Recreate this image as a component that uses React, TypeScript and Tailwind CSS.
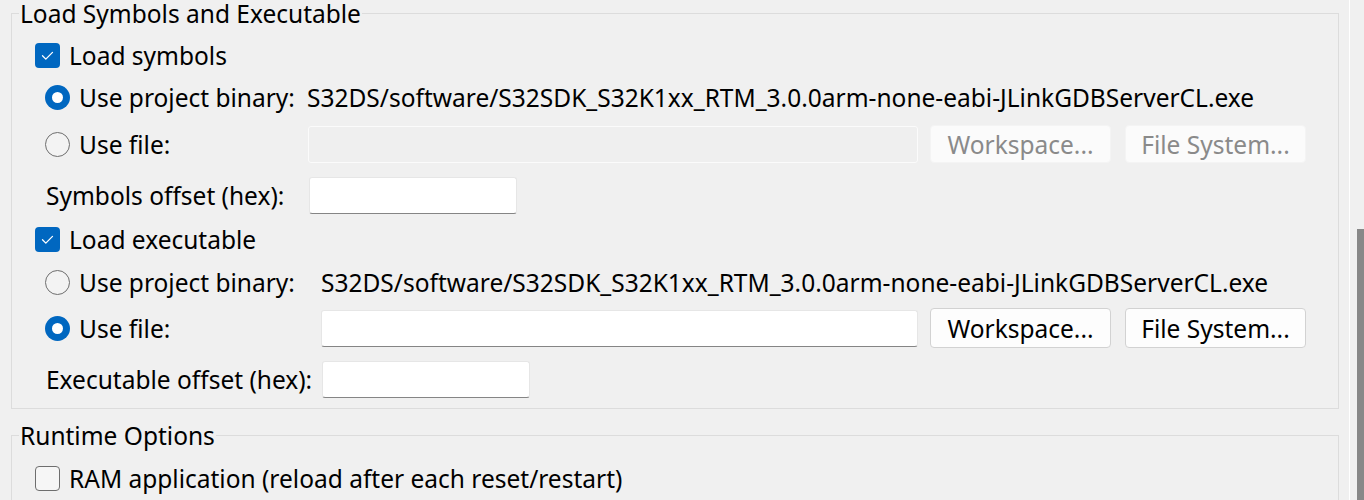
import React from "react"

const PATH = "S32DS/software/S32SDK_S32K1xx_RTM_3.0.0arm-none-eabi-JLinkGDBServerCL.exe"

function Checkbox({ checked }: { checked: boolean }) {
  return checked ? (
    <span className="flex h-[25px] w-[25px] shrink-0 items-center justify-center rounded-[4px] bg-[#0067c0]">
      <svg width="25" height="25" viewBox="0 0 25 25" fill="none">
        <path d="M7.5 12.8l3.3 3.3 6.7-6.7" stroke="white" strokeWidth="1.3" strokeLinecap="round" strokeLinejoin="round" />
      </svg>
    </span>
  ) : (
    <span className="h-[25px] w-[25px] shrink-0 rounded-[4px] border border-[#6e6e6e] bg-[#f6f6f6]" />
  )
}

function Radio({ checked }: { checked: boolean }) {
  return checked ? (
    <span className="flex h-[25px] w-[25px] shrink-0 items-center justify-center rounded-full bg-[#0067c0]">
      <span className="h-[11px] w-[11px] rounded-full bg-white" />
    </span>
  ) : (
    <span className="h-[25px] w-[25px] shrink-0 rounded-full border border-[#6e6e6e] bg-[#f3f3f3]" />
  )
}

function TextField({ width, disabled }: { width: string; disabled?: boolean }) {
  return disabled ? (
    <div className={`${width} h-[37px] rounded-[3px] border border-[#fbfbfb] bg-[#efefef]`} />
  ) : (
    <div className={`${width} h-[37px] rounded-[3px] border border-[#e6e6e6] border-b-[#858585] bg-white`} />
  )
}

function Button({ label, disabled }: { label: string; disabled?: boolean }) {
  return (
    <button
      className={
        disabled
          ? "h-[38px] w-[181px] rounded-[4px] border border-[#f4f4f4] bg-[#fbfbfb] text-[#8a8a8a]"
          : "h-[40px] w-[181px] rounded-[4px] border border-[#d2d2d2] bg-[#fdfdfd] text-black"
      }
    >
      {label}
    </button>
  )
}

export default function App() {
  return (
    <div className="flex h-[500px] w-[1364px] overflow-hidden bg-[#f0f0f0] text-[24.5px] leading-[33px] text-black [font-family:'Noto_Sans',sans-serif]">
      <div className="flex-1 pl-[11px] pr-[10px]">
        {/* Load Symbols and Executable */}
        <fieldset className="border border-[#dcdcdc] pb-[10px]">
          <legend className="ml-[7px] px-px leading-[27px]">Load Symbols and Executable</legend>

          <div className="mt-[10px] flex h-[37px] items-center gap-[9px] pl-[23px]">
            <Checkbox checked />
            <span>Load symbols</span>
          </div>

          <div className="mt-[5px] grid grid-cols-[262px_1fr] items-center pl-[33px]">
            <div className="flex h-[37px] items-center gap-[9px]">
              <Radio checked />
              <span>Use project binary:</span>
            </div>
            <span className="whitespace-nowrap">{PATH}</span>
          </div>

          <div className="mt-[9px] grid grid-cols-[263px_1fr] items-center pl-[33px]">
            <div className="flex h-[37px] items-center gap-[9px]">
              <Radio checked={false} />
              <span>Use file:</span>
            </div>
            <div className="flex items-center">
              <TextField width="w-[610px]" disabled />
              <div className="ml-[12px] flex gap-[14px]">
                <Button label="Workspace..." disabled />
                <Button label="File System..." disabled />
              </div>
            </div>
          </div>

          <div className="mt-[14px] grid grid-cols-[263px_1fr] items-center pl-[34px]">
            <span>Symbols offset (hex):</span>
            <TextField width="w-[208px]" />
          </div>

          <div className="mt-[7px] flex h-[37px] items-center gap-[9px] pl-[23px]">
            <Checkbox checked />
            <span>Load executable</span>
          </div>

          <div className="mt-[6px] grid grid-cols-[276px_1fr] items-center pl-[33px]">
            <div className="flex h-[37px] items-center gap-[9px]">
              <Radio checked={false} />
              <span>Use project binary:</span>
            </div>
            <span className="whitespace-nowrap">{PATH}</span>
          </div>

          <div className="mt-[7px] grid grid-cols-[276px_1fr] items-center pl-[33px]">
            <div className="flex h-[37px] items-center gap-[9px]">
              <Radio checked />
              <span>Use file:</span>
            </div>
            <div className="flex items-center">
              <TextField width="w-[597px]" />
              <div className="ml-[12px] flex gap-[14px]">
                <Button label="Workspace..." />
                <Button label="File System..." />
              </div>
            </div>
          </div>

          <div className="mt-[13px] grid grid-cols-[276px_1fr] items-center pl-[34px]">
            <span>Executable offset (hex):</span>
            <TextField width="w-[208px]" />
          </div>
        </fieldset>

        {/* Runtime Options */}
        <fieldset className="mt-[13px] border border-[#dcdcdc] pb-[10px]">
          <legend className="ml-[7px] px-px leading-[27px]">Runtime Options</legend>
          <div className="mt-[11px] flex h-[37px] items-center gap-[9px] pl-[23px]">
            <Checkbox checked={false} />
            <span>RAM application (reload after each reset/restart)</span>
          </div>
        </fieldset>
      </div>

      {/* scrollbar */}
      <div className="flex w-[15px] border-l border-white">
        <div className="ml-auto mt-[229px] h-full w-[7px] bg-[#888888]" />
      </div>
    </div>
  )
}
